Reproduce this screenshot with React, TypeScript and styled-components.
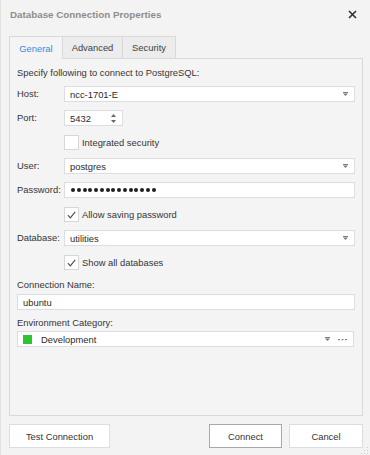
import styled, { createGlobalStyle } from 'styled-components'

const GlobalStyle = createGlobalStyle`
  html, body {
    margin: 0;
    padding: 0;
    background: #f3f3f3;
  }
  * {
    box-sizing: border-box;
  }
`

const Window = styled.div`
  width: 370px;
  height: 455px;
  display: flex;
  flex-direction: column;
  background: #f3f3f3;
  border-left: 1px solid #e2e2e2;
  font-family: "Liberation Sans", Arial, sans-serif;
  font-size: 9.4px;
  color: #353535;
  position: relative;
`

const TitleBar = styled.div`
  height: 36px;
  padding: 0 13px 8px 9px;
  display: flex;
  align-items: center;
  justify-content: space-between;
`

const Title = styled.div`
  font-weight: bold;
  font-size: 9.8px;
  color: #8d8d8d;
`

const CloseButton = styled.div`
  width: 10px;
  height: 10px;
  display: flex;
  align-items: center;
  justify-content: center;
`

const Body = styled.div`
  flex: 1;
  display: flex;
  flex-direction: column;
  padding: 0 7px 0 8px;
`

const TabStrip = styled.div`
  display: flex;
  height: 22px;
`

const Tab = styled.div<{ $active?: boolean; $width: number }>`
  width: ${p => p.$width}px;
  height: 23px;
  display: flex;
  align-items: center;
  justify-content: center;
  border: 1px solid #d9d9d9;
  border-bottom: ${p => (p.$active ? 'none' : '1px solid #d9d9d9')};
  margin-left: -1px;
  background: ${p => (p.$active ? '#f4f4f4' : '#ececec')};
  color: ${p => (p.$active ? '#3a8ad8' : '#404040')};
  position: relative;
  z-index: ${p => (p.$active ? 2 : 1)};
  &:first-child {
    margin-left: 0;
  }
`

const Panel = styled.div`
  flex: 1;
  border: 1px solid #d9d9d9;
  background: #f4f4f4;
  padding: 6px 7px 0 7px;
  display: flex;
  flex-direction: column;
`

const Caption = styled.div<{ $top?: number }>`
  height: 16px;
  line-height: 16px;
  margin-top: ${p => p.$top ?? 0}px;
`

const Form = styled.div`
  display: flex;
  flex-direction: column;
  gap: 8px;
  margin-top: 5px;
`

const Row = styled.div`
  display: grid;
  grid-template-columns: 47px 1fr;
  align-items: center;
  height: 16px;
`

const Label = styled.div`
  line-height: 16px;
  white-space: nowrap;
`

const Editor = styled.div<{ $width?: number; $inset?: number }>`
  height: 16px;
  width: ${p => (p.$width ? `${p.$width}px` : `calc(100% - ${p.$inset ?? 0}px)`)};
  background: #fff;
  border: 1px solid #dcdce2;
  display: flex;
  align-items: center;
  padding: 0 6px 0 5px;
  color: #2a2a2a;
`

const EditorText = styled.div`
  flex: 1;
  white-space: nowrap;
`

const Dots = styled.div`
  flex: 1;
  display: flex;
  gap: 1.75px;
  padding-left: 1px;
`

const Dot = styled.span`
  width: 4px;
  height: 4px;
  border-radius: 50%;
  background: #1e1e1e;
`

const SpinButtons = styled.div`
  display: flex;
  flex-direction: column;
  gap: 3px;
  align-items: center;
`

const CheckRow = styled.div`
  height: 16px;
  display: flex;
  align-items: center;
  padding-left: 47px;
`

const CheckBox = styled.div`
  width: 15px;
  height: 15px;
  background: #fff;
  border: 1px solid #d6d6dc;
  display: flex;
  align-items: center;
  justify-content: center;
  margin-right: 3px;
  margin-top: 1px;
`

const Swatch = styled.div<{ $color: string }>`
  width: 9px;
  height: 9px;
  background: ${p => p.$color};
  margin-right: 9px;
`

const FullEditorWrap = styled.div<{ $top?: number }>`
  margin-top: ${p => p.$top ?? 0}px;
`

const Footer = styled.div`
  height: 39px;
  display: flex;
  align-items: flex-start;
  padding-top: 8px;
`

const Button = styled.div<{ $width: number; $default?: boolean; $gapLeft?: number }>`
  width: ${p => p.$width}px;
  height: 24px;
  display: flex;
  align-items: center;
  justify-content: center;
  background: #fff;
  border: 1px solid ${p => (p.$default ? '#a8a8a8' : '#dcdce2')};
  margin-left: ${p => p.$gapLeft ?? 0}px;
  color: #333;
`

const Spacer = styled.div`
  flex: 1;
`

const Grip = styled.div`
  position: absolute;
  right: 1px;
  bottom: 1px;
  width: 8px;
  height: 8px;
`

function DropArrow() {
  return (
    <svg width="5" height="4" viewBox="0 0 5 4">
      <rect x="0" y="0" width="5" height="1" fill="#7a7a7a" />
      <path d="M0 1.5 H5 L2.5 4 Z" fill="#7a7a7a" />
    </svg>
  )
}

function Ellipsis() {
  return (
    <svg width="9" height="3" viewBox="0 0 9 3" style={{ marginLeft: 8 }}>
      <rect x="0" y="1" width="2" height="1.2" fill="#808080" />
      <rect x="3.5" y="1" width="2" height="1.2" fill="#808080" />
      <rect x="7" y="1" width="2" height="1.2" fill="#808080" />
    </svg>
  )
}

function Spin() {
  return (
    <SpinButtons>
      <svg width="5" height="3" viewBox="0 0 5 3">
        <path d="M0 3 H5 L2.5 0 Z" fill="#666" />
      </svg>
      <svg width="5" height="3" viewBox="0 0 5 3">
        <path d="M0 0 H5 L2.5 3 Z" fill="#666" />
      </svg>
    </SpinButtons>
  )
}

function Check({ checked, label }: { checked?: boolean; label: string }) {
  return (
    <CheckRow>
      <CheckBox>
        {checked && (
          <svg width="9" height="8" viewBox="0 0 9 8">
            <path d="M0.8 4.2 L3.3 6.8 L8.2 0.8" fill="none" stroke="#4a4a4a" strokeWidth="1.1" />
          </svg>
        )}
      </CheckBox>
      <span>{label}</span>
    </CheckRow>
  )
}

export default function App() {
  const passwordLength = 15
  return (
    <>
      <GlobalStyle />
      <Window>
        <TitleBar>
          <Title>Database Connection Properties</Title>
          <CloseButton>
            <svg width="9" height="9" viewBox="0 0 9 9">
              <path d="M1 1 L8 8 M8 1 L1 8" stroke="#333" strokeWidth="1.6" />
            </svg>
          </CloseButton>
        </TitleBar>
        <Body>
          <TabStrip>
            <Tab $active $width={54}>General</Tab>
            <Tab $width={61}>Advanced</Tab>
            <Tab $width={54}>Security</Tab>
          </TabStrip>
          <Panel>
            <Caption>Specify following to connect to PostgreSQL:</Caption>
            <Form>
              <Row>
                <Label>Host:</Label>
                <Editor>
                  <EditorText>ncc-1701-E</EditorText>
                  <DropArrow />
                </Editor>
              </Row>
              <Row>
                <Label>Port:</Label>
                <Editor $width={59}>
                  <EditorText>5432</EditorText>
                  <Spin />
                </Editor>
              </Row>
              <Check label="Integrated security" />
              <Row>
                <Label>User:</Label>
                <Editor>
                  <EditorText>postgres</EditorText>
                  <DropArrow />
                </Editor>
              </Row>
              <Row>
                <Label>Password:</Label>
                <Editor>
                  <Dots>
                    {Array.from({ length: passwordLength }, (_, i) => (
                      <Dot key={i} />
                    ))}
                  </Dots>
                </Editor>
              </Row>
              <Check checked label="Allow saving password" />
              <Row>
                <Label>Database:</Label>
                <Editor>
                  <EditorText>utilities</EditorText>
                  <DropArrow />
                </Editor>
              </Row>
              <Check checked label="Show all databases" />
            </Form>
            <Caption $top={7}>Connection Name:</Caption>
            <FullEditorWrap $top={1}>
              <Editor>
                <EditorText>ubuntu</EditorText>
              </Editor>
            </FullEditorWrap>
            <Caption $top={5}>Environment Category:</Caption>
            <FullEditorWrap>
              <Editor $inset={1}>
                <Swatch $color="#2fc42f" />
                <EditorText>Development</EditorText>
                <DropArrow />
                <Ellipsis />
              </Editor>
            </FullEditorWrap>
          </Panel>
          <Footer>
            <Button $width={101}>Test Connection</Button>
            <Spacer />
            <Button $width={73} $default>Connect</Button>
            <Button $width={74} $gapLeft={7}>Cancel</Button>
          </Footer>
        </Body>
        <Grip>
          <svg width="8" height="8" viewBox="0 0 8 8">
            <rect x="6" y="0" width="1" height="1" fill="#c8c8c8" />
            <rect x="3" y="3" width="1" height="1" fill="#c8c8c8" />
            <rect x="6" y="3" width="1" height="1" fill="#c8c8c8" />
            <rect x="0" y="6" width="1" height="1" fill="#c8c8c8" />
            <rect x="3" y="6" width="1" height="1" fill="#c8c8c8" />
            <rect x="6" y="6" width="1" height="1" fill="#c8c8c8" />
          </svg>
        </Grip>
      </Window>
    </>
  )
}
